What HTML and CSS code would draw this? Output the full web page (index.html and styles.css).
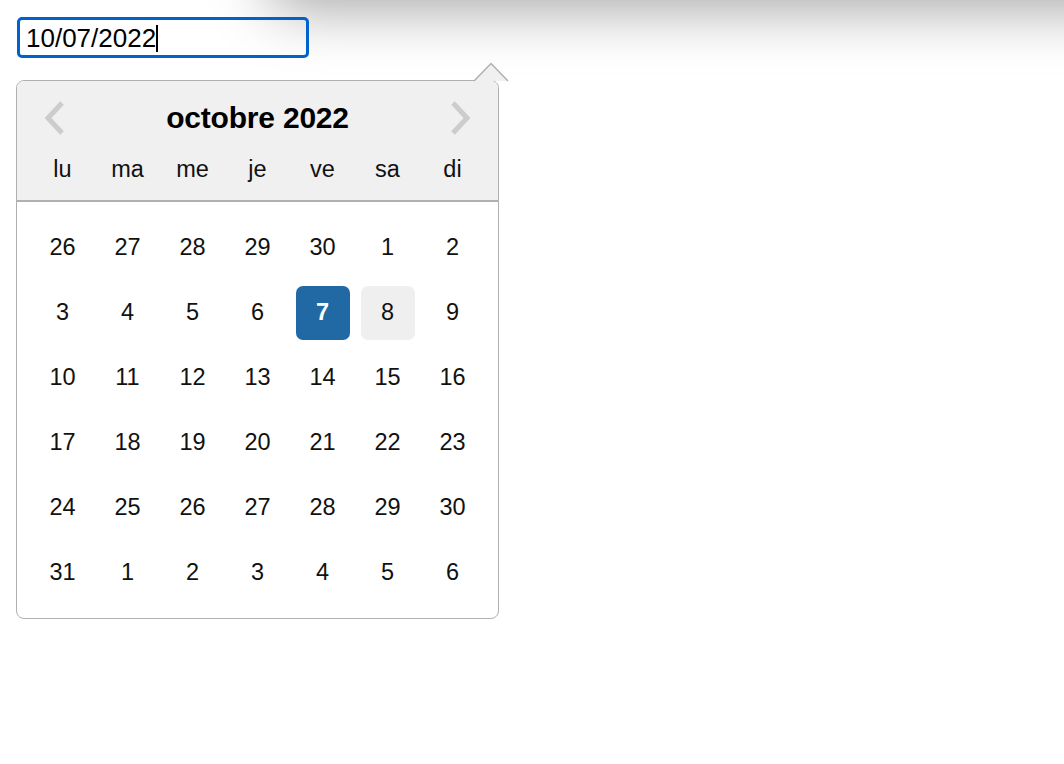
FILE: index.html
```html
<!DOCTYPE html>
<html lang="fr">
<head>
<meta charset="utf-8">
<title>Date</title>
<link rel="stylesheet" href="styles.css">
</head>
<body>
<div class="topshadow"></div>
<div class="page">
  <div class="input"><span class="value">10/07/2022</span><span class="caret"></span></div>
  <div class="cal">
    <svg class="tip" width="38" height="20" viewBox="0 0 38 20">
      <polygon points="1,19 18,1.5 35,19" fill="#f0f0f0"/>
      <polyline points="1,19 18,1.5 35,19" fill="none" stroke="#b0b0b0" stroke-width="1.5"/>
    </svg>
    <div class="head">
      <div class="titlerow">
        <svg class="nav" width="26" height="36" viewBox="0 0 26 36"><polyline points="21,3 7,18 21,33" fill="none" stroke="#cccccc" stroke-width="5"/></svg>
        <div class="title">octobre 2022</div>
        <svg class="nav" width="26" height="36" viewBox="0 0 26 36"><polyline points="5,3 19,18 5,33" fill="none" stroke="#cccccc" stroke-width="5"/></svg>
      </div>
      <div class="weekdays">
        <span>lu</span><span>ma</span><span>me</span><span>je</span><span>ve</span><span>sa</span><span>di</span>
      </div>
    </div>
    <div class="days">
      <div class="d"><span>26</span></div><div class="d"><span>27</span></div><div class="d"><span>28</span></div><div class="d"><span>29</span></div><div class="d"><span>30</span></div><div class="d"><span>1</span></div><div class="d"><span>2</span></div>
      <div class="d"><span>3</span></div><div class="d"><span>4</span></div><div class="d"><span>5</span></div><div class="d"><span>6</span></div><div class="d sel"><span>7</span></div><div class="d hov"><span>8</span></div><div class="d"><span>9</span></div>
      <div class="d"><span>10</span></div><div class="d"><span>11</span></div><div class="d"><span>12</span></div><div class="d"><span>13</span></div><div class="d"><span>14</span></div><div class="d"><span>15</span></div><div class="d"><span>16</span></div>
      <div class="d"><span>17</span></div><div class="d"><span>18</span></div><div class="d"><span>19</span></div><div class="d"><span>20</span></div><div class="d"><span>21</span></div><div class="d"><span>22</span></div><div class="d"><span>23</span></div>
      <div class="d"><span>24</span></div><div class="d"><span>25</span></div><div class="d"><span>26</span></div><div class="d"><span>27</span></div><div class="d"><span>28</span></div><div class="d"><span>29</span></div><div class="d"><span>30</span></div>
      <div class="d"><span>31</span></div><div class="d"><span>1</span></div><div class="d"><span>2</span></div><div class="d"><span>3</span></div><div class="d"><span>4</span></div><div class="d"><span>5</span></div><div class="d"><span>6</span></div>
    </div>
  </div>
</div>
</body>
</html>
```
FILE: styles.css
```css
html, body {
  margin: 0;
  padding: 0;
  background: #ffffff;
  font-family: "Liberation Sans", Arial, sans-serif;
  color: #111111;
  overflow: hidden;
}
.topshadow {
  position: absolute;
  top: -70px;
  left: 280px;
  right: -120px;
  height: 70px;
  box-shadow: 0 0 60px 8px rgba(0, 0, 0, 0.36);
  background: #888;
}
.page {
  position: relative;
  padding: 17px 16px;
}
.input {
  box-sizing: border-box;
  width: 292px;
  height: 41px;
  margin-left: 1px;
  border: 3px solid #0062cc;
  border-radius: 5px;
  padding-left: 6px;
  padding-top: 1px;
  display: flex;
  align-items: center;
  font-size: 26px;
  color: #000;
}
.caret {
  display: inline-block;
  width: 2px;
  height: 27px;
  background: #000;
}
.cal {
  position: relative;
  box-sizing: border-box;
  width: 483px;
  margin-top: 22px;
  border: 1.5px solid #b0b0b0;
  border-radius: 8px;
  background: #fff;
}
.tip {
  position: absolute;
  left: 456px;
  top: -19px;
  display: block;
}
.head {
  background: #f0f0f0;
  border-radius: 7px 7px 0 0;
  border-bottom: 2px solid #b0b0b0;
  padding: 16px 0 16px;
}
.titlerow {
  display: flex;
  align-items: center;
  justify-content: space-between;
  padding: 0 24px 0 24px;
  height: 42px;
}
.nav { display: block; }
.title {
  font-size: 30px;
  font-weight: bold;
  color: #000;
  letter-spacing: -0.2px;
}
.weekdays {
  margin-top: 15px;
  display: grid;
  grid-template-columns: repeat(7, 65px);
  padding: 0 13px;
  font-size: 23.5px;
  line-height: 30px;
  text-align: center;
}
.days {
  display: grid;
  grid-template-columns: repeat(7, 65px);
  grid-auto-rows: 65px;
  padding: 13px 13px 13px;
  font-size: 23.5px;
}
.d {
  display: flex;
  align-items: center;
  justify-content: center;
}
.d span {
  width: 54px;
  height: 54px;
  border-radius: 7px;
  display: flex;
  align-items: center;
  justify-content: center;
}
.d.sel span {
  background: #2069a4;
  color: #fff;
  font-weight: bold;
}
.d.hov span {
  background: #efefef;
}
```
